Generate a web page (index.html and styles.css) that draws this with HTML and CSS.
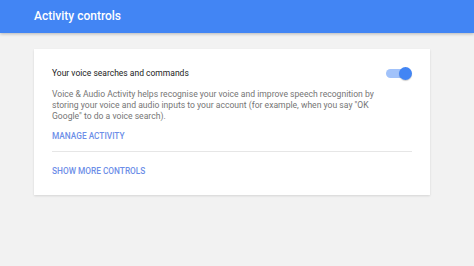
FILE: index.html
```html
<!DOCTYPE html>
<html lang="en">
<head>
	<meta charset="UTF-8">
	<title>Activity controls</title>
	<link rel="stylesheet" href="styles.css">
</head>
<body>
	<header class="topbar">
		<h1>Activity controls</h1>
	</header>
	<main class="content">
		<section class="card">
			<div class="setting">
				<div class="setting-head">
					<h2>Your voice searches and commands</h2>
					<span class="toggle"><span class="toggle-track"></span><span class="toggle-thumb"></span></span>
				</div>
				<p class="desc">Voice &amp; Audio Activity helps recognise your voice and improve speech recognition by storing your voice and audio inputs to your account (for example, when you say "OK Google" to do a voice search).</p>
				<a class="link" href="#">MANAGE ACTIVITY</a>
			</div>
			<div class="more">
				<a class="link" href="#">SHOW MORE CONTROLS</a>
			</div>
		</section>
	</main>
</body>
</html>
```

FILE: styles.css
```css
* {
	box-sizing: border-box;
}

body {
	margin: 0;
	padding: 0;
	font-family: Roboto, "Liberation Sans", sans-serif;
	background-color: #f2f2f2;
	height: 266px;
}

.topbar {
	height: 33px;
	background-color: #4285f4;
	box-shadow: 0 1px 3px rgba(0, 0, 0, .25);
	padding: 0 34px;
	display: flex;
	align-items: center;
}

.topbar h1 {
	margin: 0;
	color: #fff;
	font-size: 12px;
	font-weight: 500;
	margin-top: -1px;
}

.content {
	padding: 16px 0 0 34px;
}

.card {
	width: 396px;
	background-color: #fff;
	box-shadow: 0 1px 2px rgba(0, 0, 0, .12);
	padding: 0 18px;
}

.setting {
	padding-top: 17px;
	padding-bottom: 10px;
	border-bottom: 1px solid #e6e6e6;
}

.setting-head {
	display: flex;
	align-items: center;
	justify-content: space-between;
	height: 14px;
}

.setting-head h2 {
	margin: 0;
	font-size: 8.5px;
	font-weight: 400;
	color: #222;
}

.toggle {
	position: relative;
	width: 26px;
	height: 13px;
	margin-right: 0;
}

.toggle-track {
	position: absolute;
	left: 0;
	top: 2px;
	width: 22px;
	height: 9px;
	border-radius: 5px;
	background-color: #a1c2fa;
}

.toggle-thumb {
	position: absolute;
	right: 0;
	top: 0;
	width: 13px;
	height: 13px;
	border-radius: 50%;
	background-color: #4285f4;
	box-shadow: 0 1px 1px rgba(0, 0, 0, .2);
}

.desc {
	margin: 9px 0 8px;
	font-size: 8.6px;
	line-height: 11.2px;
	color: #757575;
	padding-right: 20px;
}

.link {
	display: block;
	font-size: 8.3px;
	font-weight: 500;
	color: #6d8ee8;
	text-decoration: none;
}

.more {
	padding: 14px 0 19px;
}
```
